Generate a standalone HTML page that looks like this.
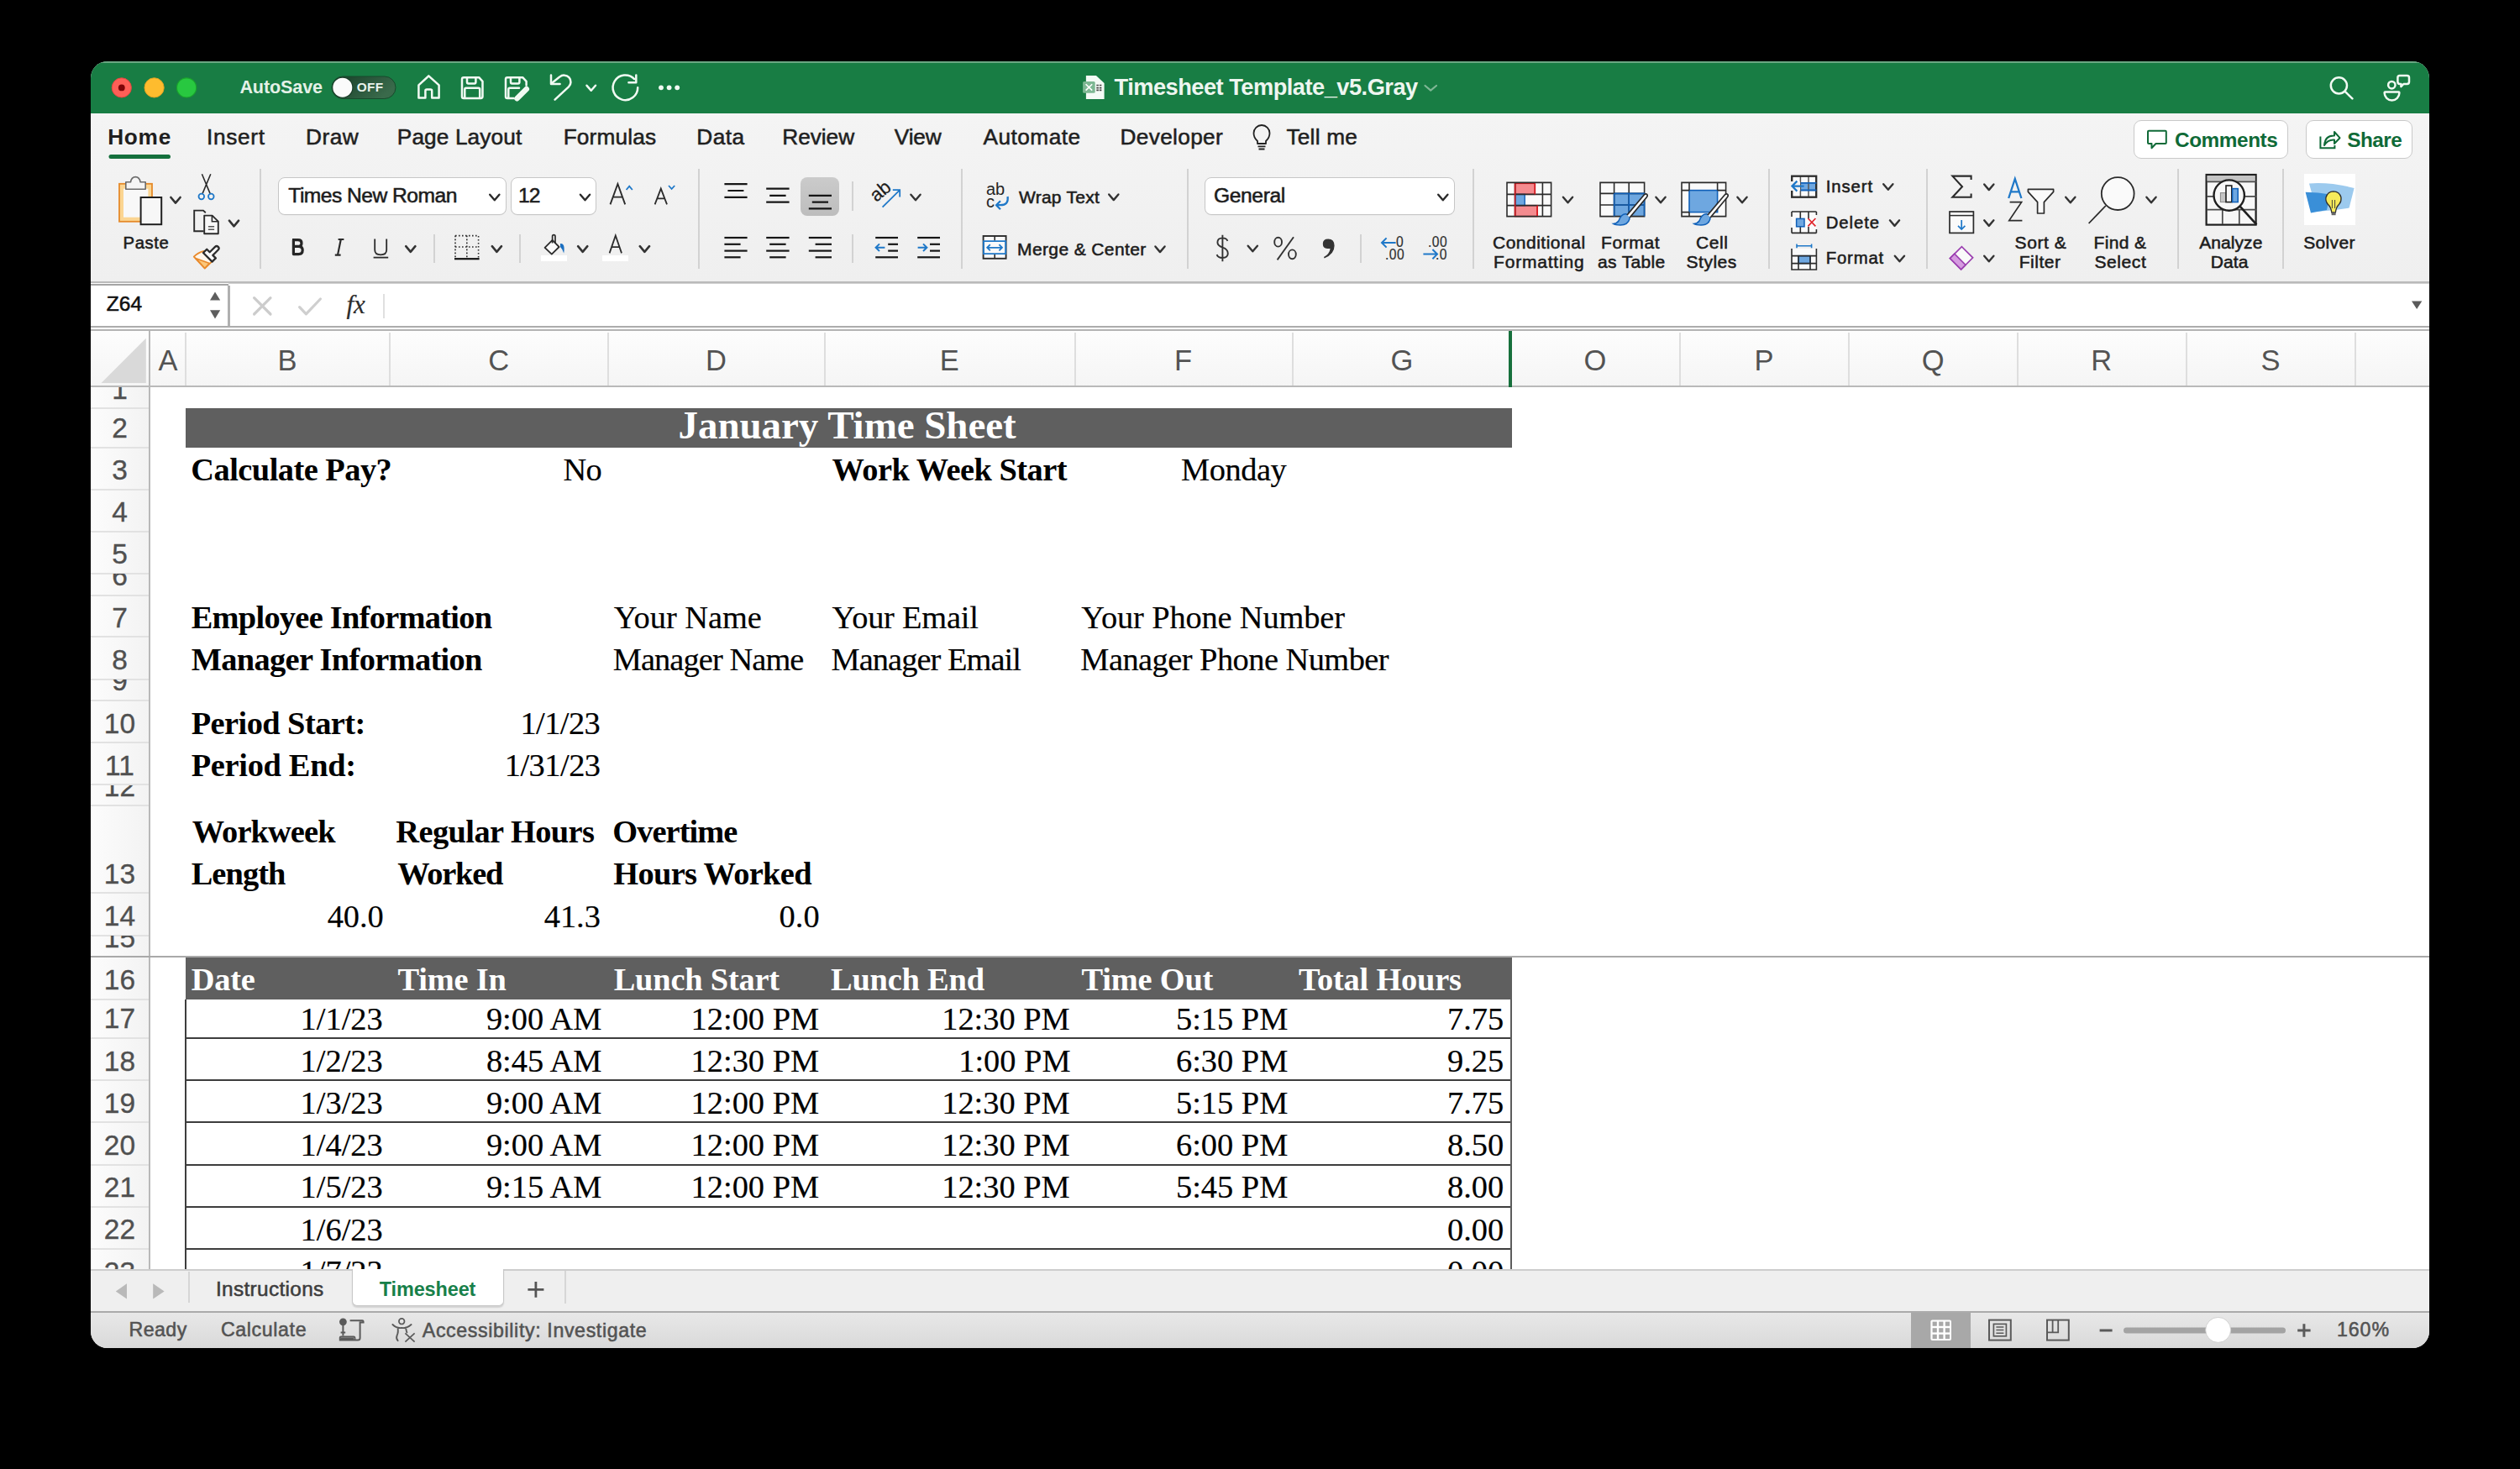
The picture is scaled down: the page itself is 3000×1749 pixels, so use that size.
<!DOCTYPE html>
<html><head><meta charset="utf-8"><style>
html,body{margin:0;padding:0}
body{width:3000px;height:1749px;background:#000;position:relative;overflow:hidden}
#win{position:absolute;left:108px;top:73px;width:2784px;height:1532px;border-radius:20px;overflow:hidden;background:#f1f1f1}
#pg{position:absolute;left:-108px;top:-73px;width:3000px;height:1749px}
.r{position:absolute}
.t{position:absolute;white-space:pre}
svg{position:absolute;left:0;top:0}
</style></head><body>
<div id="win"><div id="pg">
<div class=r style="left:108px;top:73px;width:2784px;height:62px;background:#187d44;"></div>
<div class=r style="left:108px;top:73px;width:2784px;height:2px;background:#6aa883;"></div>
<div class=r style="left:108px;top:135px;width:2784px;height:201px;background:linear-gradient(#f4f4f4,#efefef);"></div>
<div class=r style="left:108px;top:335px;width:2784px;height:2px;background:#bababa;"></div>
<div class=r style="left:108px;top:337px;width:2784px;height:51px;background:#ffffff;"></div>
<div class=r style="left:108px;top:338px;width:164px;height:2px;background:#a5a5a5;"></div>
<div class=r style="left:272px;top:337px;width:2620px;height:1px;background:#cfcfcf;"></div>
<div class=r style="left:271px;top:340px;width:3px;height:48px;background:#b0b0b0;"></div>
<div class=r style="left:108px;top:388px;width:2784px;height:2px;background:#adadad;"></div>
<div class=r style="left:108px;top:390px;width:2784px;height:2px;background:#f7f7f7;"></div>
<div class=r style="left:108px;top:392px;width:2784px;height:2px;background:#b4b4b4;"></div>
<div class=r style="left:2539.6px;top:143.3px;width:184.20000000000027px;height:45.39999999999998px;background:#ffffff;border:1.5px solid #c9c9c9;border-radius:9px;box-sizing:border-box"></div>
<div class=r style="left:2744.6px;top:143.3px;width:127.0px;height:45.39999999999998px;background:#ffffff;border:1.5px solid #c9c9c9;border-radius:9px;box-sizing:border-box"></div>
<div class=r style="left:309px;top:201px;width:2px;height:119px;background:#d2d2d2;"></div>
<div class=r style="left:831px;top:201px;width:2px;height:119px;background:#d2d2d2;"></div>
<div class=r style="left:1144px;top:201px;width:2px;height:119px;background:#d2d2d2;"></div>
<div class=r style="left:1412.7px;top:201px;width:2.0px;height:119px;background:#d2d2d2;"></div>
<div class=r style="left:1753px;top:201px;width:2px;height:119px;background:#d2d2d2;"></div>
<div class=r style="left:2104.7px;top:201px;width:2.0px;height:119px;background:#d2d2d2;"></div>
<div class=r style="left:2292.6px;top:201px;width:2.0px;height:119px;background:#d2d2d2;"></div>
<div class=r style="left:2592px;top:201px;width:2px;height:119px;background:#d2d2d2;"></div>
<div class=r style="left:2717.4px;top:201px;width:2.0px;height:119px;background:#d2d2d2;"></div>
<div class=r style="left:516px;top:279px;width:2px;height:33.5px;background:#d2d2d2;"></div>
<div class=r style="left:618.4px;top:279px;width:2.0px;height:33.5px;background:#d2d2d2;"></div>
<div class=r style="left:1014.4px;top:279px;width:2.0px;height:33.5px;background:#d2d2d2;"></div>
<div class=r style="left:1618.7px;top:279px;width:2.0px;height:33.5px;background:#d2d2d2;"></div>
<div class=r style="left:1014.4px;top:216px;width:2.0px;height:35px;background:#d2d2d2;"></div>
<div class=r style="left:331px;top:211px;width:271.6px;height:45.39999999999998px;background:#ffffff;border:1.5px solid #c6c6c6;border-radius:8px;box-sizing:border-box;box-shadow:0 0.5px 0.5px rgba(0,0,0,0.05)"></div>
<div class=r style="left:607.6px;top:211px;width:102.89999999999998px;height:45.39999999999998px;background:#ffffff;border:1.5px solid #c6c6c6;border-radius:8px;box-sizing:border-box;box-shadow:0 0.5px 0.5px rgba(0,0,0,0.05)"></div>
<div class=r style="left:643.7px;top:304px;width:31.09999999999991px;height:7px;background:#ffffff;"></div>
<div class=r style="left:717px;top:304px;width:31px;height:7px;background:#ffffff;"></div>
<div class=r style="left:953px;top:211px;width:46px;height:46px;background:linear-gradient(#cbcbcb,#bdbdbd);border-radius:8px"></div>
<div class=r style="left:1433.5px;top:211px;width:298.9000000000001px;height:45.39999999999998px;background:#ffffff;border:1.5px solid #c6c6c6;border-radius:8px;box-sizing:border-box;box-shadow:0 0.5px 0.5px rgba(0,0,0,0.05)"></div>
<div class=r style="left:108px;top:394px;width:2784px;height:66px;background:linear-gradient(#fdfdfd,#f5f5f5);"></div>
<div class=r style="left:108px;top:459px;width:2784px;height:2px;background:#b9b9b9;"></div>
<div class=r style="left:220.25px;top:396px;width:1.5px;height:63px;background:#dedede;"></div>
<div class=r style="left:463.25px;top:396px;width:1.5px;height:63px;background:#dedede;"></div>
<div class=r style="left:723.25px;top:396px;width:1.5px;height:63px;background:#dedede;"></div>
<div class=r style="left:981.25px;top:396px;width:1.5px;height:63px;background:#dedede;"></div>
<div class=r style="left:1279.25px;top:396px;width:1.5px;height:63px;background:#dedede;"></div>
<div class=r style="left:1538.25px;top:396px;width:1.5px;height:63px;background:#dedede;"></div>
<div class=r style="left:1797.25px;top:396px;width:1.5px;height:63px;background:#dedede;"></div>
<div class=r style="left:1999.25px;top:396px;width:1.5px;height:63px;background:#dedede;"></div>
<div class=r style="left:2200.25px;top:396px;width:1.5px;height:63px;background:#dedede;"></div>
<div class=r style="left:2401.25px;top:396px;width:1.5px;height:63px;background:#dedede;"></div>
<div class=r style="left:2602.25px;top:396px;width:1.5px;height:63px;background:#dedede;"></div>
<div class=r style="left:2803.25px;top:396px;width:1.5px;height:63px;background:#dedede;"></div>
<div class=r style="left:1796px;top:394px;width:4px;height:67px;background:#17703c;"></div>
<div class=r style="left:179px;top:461px;width:2713px;height:1050px;background:#ffffff;"></div>
<div class=r style="left:108px;top:461px;width:69px;height:1050px;background:linear-gradient(90deg,#fcfcfc,#f3f3f3);"></div>
<div class=r style="left:177px;top:394px;width:2px;height:1117px;background:#b9b9b9;"></div>
<div class=r style="left:108px;top:485px;width:69px;height:2px;background:#e2e2e2;"></div>
<div class=r style="left:108px;top:532px;width:69px;height:2px;background:#e2e2e2;"></div>
<div class=r style="left:108px;top:582px;width:69px;height:2px;background:#e2e2e2;"></div>
<div class=r style="left:108px;top:632px;width:69px;height:2px;background:#e2e2e2;"></div>
<div class=r style="left:108px;top:682px;width:69px;height:2px;background:#e2e2e2;"></div>
<div class=r style="left:108px;top:708px;width:69px;height:2px;background:#e2e2e2;"></div>
<div class=r style="left:108px;top:757px;width:69px;height:2px;background:#e2e2e2;"></div>
<div class=r style="left:108px;top:808px;width:69px;height:2px;background:#e2e2e2;"></div>
<div class=r style="left:108px;top:833px;width:69px;height:2px;background:#e2e2e2;"></div>
<div class=r style="left:108px;top:883px;width:69px;height:2px;background:#e2e2e2;"></div>
<div class=r style="left:108px;top:933px;width:69px;height:2px;background:#e2e2e2;"></div>
<div class=r style="left:108px;top:958px;width:69px;height:2px;background:#e2e2e2;"></div>
<div class=r style="left:108px;top:1062px;width:69px;height:2px;background:#e2e2e2;"></div>
<div class=r style="left:108px;top:1113px;width:69px;height:2px;background:#e2e2e2;"></div>
<div class=r style="left:108px;top:1138px;width:69px;height:2px;background:#e2e2e2;"></div>
<div class=r style="left:108px;top:1189px;width:69px;height:2px;background:#e2e2e2;"></div>
<div class=r style="left:108px;top:1235px;width:69px;height:2px;background:#e2e2e2;"></div>
<div class=r style="left:108px;top:1285px;width:69px;height:2px;background:#e2e2e2;"></div>
<div class=r style="left:108px;top:1335px;width:69px;height:2px;background:#e2e2e2;"></div>
<div class=r style="left:108px;top:1386px;width:69px;height:2px;background:#e2e2e2;"></div>
<div class=r style="left:108px;top:1436px;width:69px;height:2px;background:#e2e2e2;"></div>
<div class=r style="left:108px;top:1486px;width:69px;height:2px;background:#e2e2e2;"></div>
<div class=r style="left:108px;top:460.8px;width:69px;height:25.2px;overflow:hidden"><div class=t style="left:0;width:69px;text-align:center;top:-14.3px;font-family:'Liberation Sans',sans-serif;font-size:33.5px;line-height:33.5px;color:#505050;-webkit-text-stroke:0.35px">1</div></div>
<div class=r style="left:108px;top:486.0px;width:69px;height:46.8px;overflow:hidden"><div class=t style="left:0;width:69px;text-align:center;top:7.3px;font-family:'Liberation Sans',sans-serif;font-size:33.5px;line-height:33.5px;color:#505050;-webkit-text-stroke:0.35px">2</div></div>
<div class=r style="left:108px;top:532.8px;width:69px;height:49.8px;overflow:hidden"><div class=t style="left:0;width:69px;text-align:center;top:10.3px;font-family:'Liberation Sans',sans-serif;font-size:33.5px;line-height:33.5px;color:#505050;-webkit-text-stroke:0.35px">3</div></div>
<div class=r style="left:108px;top:582.6px;width:69px;height:50.0px;overflow:hidden"><div class=t style="left:0;width:69px;text-align:center;top:10.5px;font-family:'Liberation Sans',sans-serif;font-size:33.5px;line-height:33.5px;color:#505050;-webkit-text-stroke:0.35px">4</div></div>
<div class=r style="left:108px;top:632.6px;width:69px;height:50.4px;overflow:hidden"><div class=t style="left:0;width:69px;text-align:center;top:10.9px;font-family:'Liberation Sans',sans-serif;font-size:33.5px;line-height:33.5px;color:#505050;-webkit-text-stroke:0.35px">5</div></div>
<div class=r style="left:108px;top:683.0px;width:69px;height:25.6px;overflow:hidden"><div class=t style="left:0;width:69px;text-align:center;top:-13.9px;font-family:'Liberation Sans',sans-serif;font-size:33.5px;line-height:33.5px;color:#505050;-webkit-text-stroke:0.35px">6</div></div>
<div class=r style="left:108px;top:708.6px;width:69px;height:49.6px;overflow:hidden"><div class=t style="left:0;width:69px;text-align:center;top:10.1px;font-family:'Liberation Sans',sans-serif;font-size:33.5px;line-height:33.5px;color:#505050;-webkit-text-stroke:0.35px">7</div></div>
<div class=r style="left:108px;top:758.2px;width:69px;height:50.5px;overflow:hidden"><div class=t style="left:0;width:69px;text-align:center;top:11.0px;font-family:'Liberation Sans',sans-serif;font-size:33.5px;line-height:33.5px;color:#505050;-webkit-text-stroke:0.35px">8</div></div>
<div class=r style="left:108px;top:808.7px;width:69px;height:24.8px;overflow:hidden"><div class=t style="left:0;width:69px;text-align:center;top:-14.7px;font-family:'Liberation Sans',sans-serif;font-size:33.5px;line-height:33.5px;color:#505050;-webkit-text-stroke:0.35px">9</div></div>
<div class=r style="left:108px;top:833.5px;width:69px;height:50.5px;overflow:hidden"><div class=t style="left:0;width:69px;text-align:center;top:11.0px;font-family:'Liberation Sans',sans-serif;font-size:33.5px;line-height:33.5px;color:#505050;-webkit-text-stroke:0.35px">10</div></div>
<div class=r style="left:108px;top:884.0px;width:69px;height:50.5px;overflow:hidden"><div class=t style="left:0;width:69px;text-align:center;top:11.0px;font-family:'Liberation Sans',sans-serif;font-size:33.5px;line-height:33.5px;color:#505050;-webkit-text-stroke:0.35px">11</div></div>
<div class=r style="left:108px;top:934.5px;width:69px;height:24.5px;overflow:hidden"><div class=t style="left:0;width:69px;text-align:center;top:-15.0px;font-family:'Liberation Sans',sans-serif;font-size:33.5px;line-height:33.5px;color:#505050;-webkit-text-stroke:0.35px">12</div></div>
<div class=r style="left:108px;top:959.0px;width:69px;height:104.4px;overflow:hidden"><div class=t style="left:0;width:69px;text-align:center;top:64.9px;font-family:'Liberation Sans',sans-serif;font-size:33.5px;line-height:33.5px;color:#505050;-webkit-text-stroke:0.35px">13</div></div>
<div class=r style="left:108px;top:1063.4px;width:69px;height:50.6px;overflow:hidden"><div class=t style="left:0;width:69px;text-align:center;top:11.1px;font-family:'Liberation Sans',sans-serif;font-size:33.5px;line-height:33.5px;color:#505050;-webkit-text-stroke:0.35px">14</div></div>
<div class=r style="left:108px;top:1114.0px;width:69px;height:25.3px;overflow:hidden"><div class=t style="left:0;width:69px;text-align:center;top:-14.2px;font-family:'Liberation Sans',sans-serif;font-size:33.5px;line-height:33.5px;color:#505050;-webkit-text-stroke:0.35px">15</div></div>
<div class=r style="left:108px;top:1139.3px;width:69px;height:50.3px;overflow:hidden"><div class=t style="left:0;width:69px;text-align:center;top:10.8px;font-family:'Liberation Sans',sans-serif;font-size:33.5px;line-height:33.5px;color:#505050;-webkit-text-stroke:0.35px">16</div></div>
<div class=r style="left:108px;top:1189.6px;width:69px;height:46.4px;overflow:hidden"><div class=t style="left:0;width:69px;text-align:center;top:6.9px;font-family:'Liberation Sans',sans-serif;font-size:33.5px;line-height:33.5px;color:#505050;-webkit-text-stroke:0.35px">17</div></div>
<div class=r style="left:108px;top:1236.0px;width:69px;height:50.2px;overflow:hidden"><div class=t style="left:0;width:69px;text-align:center;top:10.7px;font-family:'Liberation Sans',sans-serif;font-size:33.5px;line-height:33.5px;color:#505050;-webkit-text-stroke:0.35px">18</div></div>
<div class=r style="left:108px;top:1286.2px;width:69px;height:50.3px;overflow:hidden"><div class=t style="left:0;width:69px;text-align:center;top:10.8px;font-family:'Liberation Sans',sans-serif;font-size:33.5px;line-height:33.5px;color:#505050;-webkit-text-stroke:0.35px">19</div></div>
<div class=r style="left:108px;top:1336.5px;width:69px;height:50.2px;overflow:hidden"><div class=t style="left:0;width:69px;text-align:center;top:10.7px;font-family:'Liberation Sans',sans-serif;font-size:33.5px;line-height:33.5px;color:#505050;-webkit-text-stroke:0.35px">20</div></div>
<div class=r style="left:108px;top:1386.7px;width:69px;height:50.1px;overflow:hidden"><div class=t style="left:0;width:69px;text-align:center;top:10.6px;font-family:'Liberation Sans',sans-serif;font-size:33.5px;line-height:33.5px;color:#505050;-webkit-text-stroke:0.35px">21</div></div>
<div class=r style="left:108px;top:1436.8px;width:69px;height:50.2px;overflow:hidden"><div class=t style="left:0;width:69px;text-align:center;top:10.7px;font-family:'Liberation Sans',sans-serif;font-size:33.5px;line-height:33.5px;color:#505050;-webkit-text-stroke:0.35px">22</div></div>
<div class=r style="left:108px;top:1487.0px;width:69px;height:24.0px;overflow:hidden"><div class=t style="left:0;width:69px;text-align:center;top:10.7px;font-family:'Liberation Sans',sans-serif;font-size:33.5px;line-height:33.5px;color:#505050;-webkit-text-stroke:0.35px">23</div></div>
<div class=r style="left:108px;top:1138px;width:2784px;height:2px;background:#a9a9a9;"></div>
<div class=r style="left:221px;top:485.5px;width:1578.5px;height:47.5px;background:#5f5f5f;"></div>
<div class=r style="left:221px;top:1140px;width:1578.5px;height:50px;background:#5f5f5f;"></div>
<div class=r style="left:221px;top:1235px;width:1578.5px;height:2px;background:#3d3d3d;"></div>
<div class=r style="left:221px;top:1285px;width:1578.5px;height:2px;background:#3d3d3d;"></div>
<div class=r style="left:221px;top:1335px;width:1578.5px;height:2px;background:#3d3d3d;"></div>
<div class=r style="left:221px;top:1386px;width:1578.5px;height:2px;background:#3d3d3d;"></div>
<div class=r style="left:221px;top:1436px;width:1578.5px;height:2px;background:#3d3d3d;"></div>
<div class=r style="left:221px;top:1486px;width:1578.5px;height:2px;background:#3d3d3d;"></div>
<div class=r style="left:220px;top:1190px;width:2px;height:321px;background:#3d3d3d;"></div>
<div class=r style="left:1797.5px;top:1190px;width:2.0px;height:321px;background:#5c5c5c;"></div>
<div class=r style="left:456px;top:350px;width:2px;height:29px;background:#e0e0e0;"></div>
<div class=r style="left:108px;top:1511px;width:2784px;height:51px;background:#efefef;"></div>
<div class=r style="left:108px;top:1511px;width:2784px;height:1.5px;background:#cdcdcd;"></div>
<div class=r style="left:418.5px;top:1511px;width:181.5px;height:44px;background:#ffffff;border:1.5px solid #c8c8c8;border-top:none;border-radius:0 0 6px 6px;box-sizing:border-box;box-shadow:0 1.5px 1.5px rgba(0,0,0,0.12)"></div>
<div class=r style="left:108px;top:1561px;width:2784px;height:2px;background:#ababab;"></div>
<div class=r style="left:224px;top:1514px;width:2px;height:37px;background:#d6d6d6;"></div>
<div class=r style="left:672.2px;top:1513px;width:2.0px;height:39px;background:#d6d6d6;"></div>
<div class=r style="left:108px;top:1563px;width:2784px;height:42px;background:linear-gradient(#e8e8e8,#d9d9d9);"></div>
<div class=r style="left:2275px;top:1563px;width:71px;height:42px;background:#a8a8a8;"></div>
<svg width="3000" height="1749" viewBox="0 0 3000 1749">
<circle cx="144.8" cy="104.4" r="11.6" fill="#fe5f57" stroke="#e1473f" stroke-width="1"/>
<circle cx="144.8" cy="104.4" r="3.9" fill="#7e0508"/>
<circle cx="183.6" cy="104.4" r="11.6" fill="#febc2e" stroke="#dea123" stroke-width="1"/>
<circle cx="222.1" cy="104.4" r="11.6" fill="#28c840" stroke="#1aa22d" stroke-width="1.2"/>
<defs><linearGradient id="tg" x1="0" y1="0" x2="1" y2="0.4"><stop offset="0" stop-color="#163d27"/><stop offset="1" stop-color="#3a6a4b"/></linearGradient></defs>
<rect x="395" y="91" width="76" height="26.5" rx="13.25" fill="url(#tg)" stroke="#174a2c" stroke-width="1"/>
<circle cx="408.2" cy="104.4" r="12.2" fill="#0e2a19" opacity="0.6"/>
<circle cx="407.8" cy="104.2" r="11.5" fill="#fbfbfb"/>
<path d="M498.4 116.6 V101.4 L510.3 90.4 L522.6 101.4 V116.6 H514.2 V108.2 Q514.2 106.6 512.6 106.6 H508 Q506.4 106.6 506.4 108.2 V116.6 Z" fill="none" stroke="#f1faf3" stroke-width="2.5" stroke-linejoin="round" stroke-linecap="round"/>
<path d="M552 92.2 H570.2 L574.5 96.8 V114.8 Q574.5 117 572.3 117 H552 Q550 117 550 115 V94.2 Q550 92.2 552 92.2 Z" fill="none" stroke="#f1faf3" stroke-width="2.5" stroke-linejoin="round" stroke-linecap="round"/>
<path d="M556 92.4 V97.8 Q556 99.4 557.6 99.4 H564.8 Q566.4 99.4 566.4 97.8 V92.4" fill="none" stroke="#f1faf3" stroke-width="2.5" stroke-linejoin="round" stroke-linecap="round"/>
<path d="M553.3 116.8 V106.4 Q553.3 104.8 554.9 104.8 H569.6 Q571.2 104.8 571.2 106.4 V116.8" fill="none" stroke="#f1faf3" stroke-width="2.5" stroke-linejoin="round" stroke-linecap="round"/>
<path d="M611.5 117 H604 Q602 117 602 115 V94.2 Q602 92.2 604 92.2 H622.2 L626.6 96.8 V101.5" fill="none" stroke="#f1faf3" stroke-width="2.5" stroke-linejoin="round" stroke-linecap="round"/>
<path d="M608 92.4 V97.8 Q608 99.4 609.6 99.4 H616.8 Q618.4 99.4 618.4 97.8 V92.4" fill="none" stroke="#f1faf3" stroke-width="2.5" stroke-linejoin="round" stroke-linecap="round"/>
<path d="M605.3 116.8 V106.4 Q605.3 104.8 606.9 104.8 H618" fill="none" stroke="#f1faf3" stroke-width="2.5" stroke-linejoin="round" stroke-linecap="round"/>
<path d="M615.5 117.2 L626.8 106" stroke="#f1faf3" stroke-width="6.5" stroke-linecap="round"/>
<path d="M656 89.4 V99.9 H666.6" fill="none" stroke="#f1faf3" stroke-width="2.5" stroke-linejoin="round" stroke-linecap="round"/>
<path d="M656.6 99.2 L666.2 91.6 A8 8 0 0 1 677 103.4 L660.6 118.6" fill="none" stroke="#f1faf3" stroke-width="2.5" stroke-linejoin="round" stroke-linecap="round"/>
<path d="M698.5 101.8 L703.8 107.8 L709 101.8" fill="none" stroke="#f1faf3" stroke-width="2.5" stroke-linejoin="round" stroke-linecap="round"/>
<path d="M759.2 104.2 A14.8 14.8 0 1 1 755.2 94.2" fill="none" stroke="#f1faf3" stroke-width="2.5" stroke-linejoin="round" stroke-linecap="round"/>
<path d="M757.3 89.4 V98.2 H748.4" fill="none" stroke="#f1faf3" stroke-width="2.5" stroke-linejoin="round" stroke-linecap="round"/>
<circle cx="787" cy="104.3" r="2.9" fill="#f1faf3"/>
<circle cx="796.6" cy="104.3" r="2.9" fill="#f1faf3"/>
<circle cx="806.2" cy="104.3" r="2.9" fill="#f1faf3"/>
<path d="M1292.9 90 H1304.9 L1314.6 99.1 V118 H1292.9 Z" fill="#f4fbf6"/>
<rect x="1289.1" y="97" width="14.6" height="13.7" rx="1.5" fill="#7db893"/>
<path d="M1292.6 100.2 L1300.2 107.6 M1300.2 100.2 L1292.6 107.6" stroke="#ffffff" stroke-width="1.6"/>
<path d="M1305.3 101.5 H1307.9 M1308.8 101.5 H1311.4" stroke="#444" stroke-width="1.7"/>
<path d="M1305.3 104.6 H1307.9 M1308.8 104.6 H1311.4" stroke="#444" stroke-width="1.7"/>
<path d="M1305.3 107.4 H1307.9 M1308.8 107.4 H1311.4" stroke="#444" stroke-width="1.7"/>
<path d="M1696.5 102 L1703.2 107.6 L1710 102" fill="none" stroke="#7fb795" stroke-width="2.2" stroke-linecap="round" stroke-linejoin="round"/>
<circle cx="2784.4" cy="101.8" r="9.6" fill="none" stroke="#f1faf3" stroke-width="2.5" stroke-linejoin="round" stroke-linecap="round"/>
<path d="M2791.6 108.8 L2800.4 117.4" fill="none" stroke="#f1faf3" stroke-width="2.5" stroke-linejoin="round" stroke-linecap="round"/>
<circle cx="2847.3" cy="101.2" r="4.2" fill="none" stroke="#f1faf3" stroke-width="2.5" stroke-linejoin="round" stroke-linecap="round"/>
<path d="M2839.5 109.6 H2855.6 Q2856.4 109.6 2856.4 110.6 A8.4 8.4 0 0 1 2838.6 110.6 Q2838.6 109.6 2839.5 109.6 Z" fill="none" stroke="#f1faf3" stroke-width="2.5" stroke-linejoin="round" stroke-linecap="round"/>
<path d="M2856.8 90 H2865.6 Q2868 90 2868 92.4 V97.6 Q2868 100 2865.6 100 H2861.4 L2858.4 103.2 V100 H2856.8 Q2854.4 100 2854.4 97.6 V92.4 Q2854.4 90 2856.8 90 Z" fill="none" stroke="#f1faf3" stroke-width="2.5" stroke-linejoin="round" stroke-linecap="round"/>
<rect x="129.5" y="184" width="73.5" height="5" rx="2.5" fill="#15703d"/>
<path d="M1497 168 Q1492.5 164 1492.5 158.5 A9.5 9.5 0 0 1 1511.5 158.5 Q1511.5 164 1507 168 V171 H1497 Z" fill="none" stroke="#222" stroke-width="1.8" stroke-linejoin="round"/>
<path d="M1497.5 174.4 H1506.5 M1498.5 177.5 H1505.5" stroke="#222" stroke-width="1.8"/>
<path d="M2558 155.8 H2577.8 Q2578.8 155.8 2578.8 156.8 V170 Q2578.8 171 2577.8 171 H2566.5 L2561.5 176.2 V171 H2558 Q2557 171 2557 170 V156.8 Q2557 155.8 2558 155.8 Z" fill="none" stroke="#0f6a37" stroke-width="2" stroke-linejoin="round"/>
<path d="M2762.4 162.4 V176.3 H2779.4 V173" fill="none" stroke="#0f6a37" stroke-width="2"/>
<path d="M2767 173 Q2768 161 2779 161.5 V157 L2785.5 164.2 L2779 171 V166.5 Q2771 166 2767 173 Z" fill="none" stroke="#0f6a37" stroke-width="2" stroke-linejoin="round"/>
<rect x="142" y="218.8" width="39" height="45" fill="#fbd592" stroke="#e58a2a" stroke-width="1.8"/>
<rect x="147" y="224.7" width="29.4" height="34" fill="#f8f8f8"/>
<path d="M149.8 225.2 V216.8 H155.5 Q156.5 210.6 161.3 210.6 Q166.1 210.6 167.1 216.8 H173.2 V225.2 Z" fill="#f5f5f5" stroke="#6b6b6b" stroke-width="1.6" stroke-linejoin="round"/>
<rect x="167.6" y="235" width="24.6" height="32.2" fill="#f7f7f7" stroke="#1f1f1f" stroke-width="2"/>
<path d="M203.4 235.0 L209.0 241.6 L214.6 235.0" fill="none" stroke="#333" stroke-width="2.6" stroke-linecap="round" stroke-linejoin="round"/>
<path d="M240.4 207.2 L250.2 230.6 M250.8 207.2 L241 230.6" stroke="#2b2b2b" stroke-width="1.6" fill="none"/>
<circle cx="239.8" cy="234" r="3.3" fill="none" stroke="#1f78c8" stroke-width="1.8"/>
<circle cx="251.3" cy="234" r="3.3" fill="none" stroke="#1f78c8" stroke-width="1.8"/>
<path d="M242.6 275.3 H231.2 V250.6 H242 L244.8 253.2" fill="none" stroke="#2b2b2b" stroke-width="1.9"/>
<path d="M243.2 278.3 V256.6 H252.6 L259.8 263.6 V278.3 Z" fill="#f8f8f8" stroke="#2b2b2b" stroke-width="1.9" stroke-linejoin="round"/>
<path d="M252.4 256.8 V263.8 H259.6" fill="none" stroke="#2b2b2b" stroke-width="1.6"/>
<path d="M247.9 269.8 H255.1 M247.9 273.2 H255.1" stroke="#555" stroke-width="1.4"/>
<path d="M272.9 262.7 L278.5 269.3 L284.1 262.7" fill="none" stroke="#333" stroke-width="2.6" stroke-linecap="round" stroke-linejoin="round"/>
<path d="M230.8 305.6 Q236 300.4 243 298.8 L253.8 309.8 L243.8 319.6 Z" fill="#fff6ea" stroke="#e98a2c" stroke-width="1.8" stroke-linejoin="round"/>
<path d="M232.8 307.4 L249.4 313.4 L243.8 319.2 Z" fill="#fbc77a" stroke="#e98a2c" stroke-width="1.6" stroke-linejoin="round"/>
<path d="M-7.5 3 V-3 H-2.6 V-12 Q-2.6 -14.6 0 -14.6 Q2.6 -14.6 2.6 -12 V-3 H7.5 V3 Z" transform="translate(249.4 304.2) rotate(45)" fill="#f7f7f7" stroke="#2b2b2b" stroke-width="2.3" stroke-linejoin="round"/>
<path d="M583.2 231.7 L588.8 238.3 L594.4 231.7" fill="none" stroke="#2a2a2a" stroke-width="2.4" stroke-linecap="round" stroke-linejoin="round"/>
<path d="M690.9 231.7 L696.5 238.3 L702.1 231.7" fill="none" stroke="#2a2a2a" stroke-width="2.4" stroke-linecap="round" stroke-linejoin="round"/>
<path d="M726.5 243.4 L735.4 219 L744.2 243.4 M729.8 234.6 H741" fill="none" stroke="#2b2b2b" stroke-width="1.9"/>
<path d="M745.6 226 L749.2 221.6 L752.8 226" fill="none" stroke="#1f78c8" stroke-width="1.8"/>
<path d="M779.6 243.4 L786.8 224.6 L794 243.4 M782.2 236.4 H791.4" fill="none" stroke="#2b2b2b" stroke-width="1.8"/>
<path d="M796 221 L799.6 225 L803.2 221" fill="none" stroke="#1f78c8" stroke-width="1.8"/>
<path d="M349.4 285.6 V302.6 H355.4 Q360.2 302.6 360.2 297.8 Q360.2 293.4 355.4 293.4 H349.4 M349.4 293.4 H354.8 Q359 293.4 359 289.4 Q359 285.6 354.8 285.6 H348" fill="none" stroke="#262626" stroke-width="3.2" stroke-linejoin="round"/>
<path d="M405.8 285 L402 303.6 M402.6 285 H409.4 M398.8 303.6 H405.6" fill="none" stroke="#2b2b2b" stroke-width="2.2"/>
<path d="M446.2 284.4 V297.6 Q446.2 303.4 453.2 303.4 Q460.2 303.4 460.2 297.6 V284.4" fill="none" stroke="#2b2b2b" stroke-width="1.8"/>
<path d="M444.6 306.6 H462.2" stroke="#2b2b2b" stroke-width="1.8"/>
<path d="M483.2 293.2 L488.8 299.8 L494.4 293.2" fill="none" stroke="#333" stroke-width="2.6" stroke-linecap="round" stroke-linejoin="round"/>
<path d="M542 280.6 H569.6 V307 M542 280.6 V307 M542 294 H569.6 M555.8 280.6 V307" fill="none" stroke="#2b2b2b" stroke-width="1.6" stroke-dasharray="1.6 2.4"/>
<path d="M541 308.2 H570.6" stroke="#111" stroke-width="2.2"/>
<path d="M585.8 293.2 L591.4 299.8 L597.0 293.2" fill="none" stroke="#333" stroke-width="2.6" stroke-linecap="round" stroke-linejoin="round"/>
<path d="M648.6 294.8 L657.6 285.8 L665.6 294 L656.8 302.6 Z" fill="#fafafa" stroke="#2b2b2b" stroke-width="1.8" stroke-linejoin="round"/>
<path d="M657.6 289.6 V281.6 Q657.6 279.6 659.2 279.6 Q661 279.6 661 281.6 V290" fill="none" stroke="#2b2b2b" stroke-width="1.7"/>
<path d="M667 290 Q671.2 289.6 671.6 295 Q671.8 298.6 671.2 301.6 Q669.8 296.6 667 294 Z" fill="#1b6fc0"/>
<path d="M688.1 293.2 L693.7 299.8 L699.3 293.2" fill="none" stroke="#333" stroke-width="2.6" stroke-linecap="round" stroke-linejoin="round"/>
<path d="M725.6 301.4 L732.8 280.4 L740 301.4 M728.2 294.2 H737.4" fill="none" stroke="#2b2b2b" stroke-width="1.8"/>
<path d="M761.8 293.2 L767.4 299.8 L773.0 293.2" fill="none" stroke="#333" stroke-width="2.6" stroke-linecap="round" stroke-linejoin="round"/>
<path d="M862.4 219.2 H889.6" stroke="#161616" stroke-width="2.2"/>
<path d="M866.4 227 H885.4" stroke="#161616" stroke-width="2.2"/>
<path d="M862.4 234.8 H889.6" stroke="#161616" stroke-width="2.2"/>
<path d="M912.2 224.7 H939.6" stroke="#161616" stroke-width="2.2"/>
<path d="M916.2 232.8 H935.6" stroke="#161616" stroke-width="2.2"/>
<path d="M912.2 240.6 H939.6" stroke="#161616" stroke-width="2.2"/>
<path d="M962.8 232.8 H990" stroke="#161616" stroke-width="2.2"/>
<path d="M966.8 240.6 H986" stroke="#161616" stroke-width="2.2"/>
<path d="M962.8 248.3 H990" stroke="#161616" stroke-width="2.2"/>
<path d="M862.4 283 H889.6" stroke="#161616" stroke-width="2.2"/>
<path d="M912.2 283 H939.6" stroke="#161616" stroke-width="2.2"/>
<path d="M962.8 283 H990" stroke="#161616" stroke-width="2.2"/>
<path d="M862.4 290.8 H881.6" stroke="#161616" stroke-width="2.2"/>
<path d="M916.2 290.8 H935.6" stroke="#161616" stroke-width="2.2"/>
<path d="M970.6 290.8 H990" stroke="#161616" stroke-width="2.2"/>
<path d="M862.4 298.6 H889.6" stroke="#161616" stroke-width="2.2"/>
<path d="M912.2 298.6 H939.6" stroke="#161616" stroke-width="2.2"/>
<path d="M962.8 298.6 H990" stroke="#161616" stroke-width="2.2"/>
<path d="M862.4 306.3 H881.6" stroke="#161616" stroke-width="2.2"/>
<path d="M916.2 306.3 H935.6" stroke="#161616" stroke-width="2.2"/>
<path d="M970.6 306.3 H990" stroke="#161616" stroke-width="2.2"/>
<path d="M1050.6 246.6 L1071 226.4 M1062.8 226.2 H1071.2 V234.6" fill="none" stroke="#1f78c8" stroke-width="1.8"/>
<path d="M1084.4 231.7 L1090.0 238.3 L1095.6 231.7" fill="none" stroke="#333" stroke-width="2.4" stroke-linecap="round" stroke-linejoin="round"/>
<path d="M1042.2 283 H1069" stroke="#161616" stroke-width="2.2"/>
<path d="M1057.2 290.8 H1069" stroke="#161616" stroke-width="2.2"/>
<path d="M1057.2 298.6 H1069" stroke="#161616" stroke-width="2.2"/>
<path d="M1042.2 306.3 H1069" stroke="#161616" stroke-width="2.2"/>
<path d="M1042.6 294.7 H1053.4 M1047 290.4 L1042.6 294.7 L1047 299" fill="none" stroke="#1f78c8" stroke-width="2"/>
<path d="M1092.2 283 H1119" stroke="#161616" stroke-width="2.2"/>
<path d="M1107 290.8 H1119" stroke="#161616" stroke-width="2.2"/>
<path d="M1107 298.6 H1119" stroke="#161616" stroke-width="2.2"/>
<path d="M1092.2 306.3 H1119" stroke="#161616" stroke-width="2.2"/>
<path d="M1092.6 294.7 H1103.4 M1099 290.4 L1103.4 294.7 L1099 299" fill="none" stroke="#1f78c8" stroke-width="2"/>
<path d="M1199.6 234 Q1201 244.2 1191 244.2 H1186.4 M1191 239.2 L1186 244.2 L1191 249.2" fill="none" stroke="#1f78c8" stroke-width="2.3" stroke-linejoin="round"/>
<path d="M1320.2 231.5 L1325.8 238.1 L1331.4 231.5" fill="none" stroke="#333" stroke-width="2.4" stroke-linecap="round" stroke-linejoin="round"/>
<rect x="1170.6" y="281" width="27" height="26.8" fill="#fafafa" stroke="#2b2b2b" stroke-width="1.9"/>
<path d="M1184.2 281 V286.6 M1184.2 302.4 V307.8" stroke="#2b2b2b" stroke-width="1.6"/>
<path d="M1171 287.2 H1197.2 V302.2 H1171 Z" fill="none" stroke="#1f78c8" stroke-width="1.8"/>
<path d="M1175.2 294.8 H1193 M1178.8 291.2 L1175.2 294.8 L1178.8 298.4 M1189.4 291.2 L1193 294.8 L1189.4 298.4" fill="none" stroke="#1f78c8" stroke-width="1.8"/>
<path d="M1375.4 293.5 L1381.0 300.1 L1386.6 293.5" fill="none" stroke="#333" stroke-width="2.4" stroke-linecap="round" stroke-linejoin="round"/>
<path d="M1712.2 231.7 L1717.8 238.3 L1723.4 231.7" fill="none" stroke="#2a2a2a" stroke-width="2.4" stroke-linecap="round" stroke-linejoin="round"/>
<path d="M1461.4 286.8 Q1460 283.4 1455.4 283.4 Q1449.4 283.4 1449.4 288.6 Q1449.4 292.6 1455.4 294.6 Q1461.8 296.6 1461.8 301.8 Q1461.8 307 1455.2 307 Q1450 307 1448.6 303.2 M1455.4 279.8 V311.2" fill="none" stroke="#333" stroke-width="1.9"/>
<path d="M1485.7 292.7 L1491.3 299.3 L1496.9 292.7" fill="none" stroke="#333" stroke-width="2.4" stroke-linecap="round" stroke-linejoin="round"/>
<ellipse cx="1521.6" cy="288.2" rx="4.4" ry="5.4" fill="none" stroke="#333" stroke-width="1.9"/>
<ellipse cx="1538.4" cy="302.8" rx="4.4" ry="5.4" fill="none" stroke="#333" stroke-width="1.9"/>
<path d="M1540 282.2 L1520.6 309.4" stroke="#333" stroke-width="1.9"/>
<path d="M1580.2 296 Q1574.8 296 1574.8 290.3 Q1574.8 284.4 1581.2 284.4 Q1588.6 284.4 1588.6 292.6 Q1588.6 302.8 1576.6 307.6 L1576 306 Q1582.8 302.4 1583.6 296 Q1582.4 296 1580.2 296 Z" fill="#333"/>
<path d="M1645 289 H1661.6 M1650.6 283.4 L1645 289 L1650.6 294.6" fill="none" stroke="#1f78c8" stroke-width="2"/>
<path d="M1694.4 302.6 H1711 M1705.4 297 L1711 302.6 L1705.4 308.2" fill="none" stroke="#1f78c8" stroke-width="2"/>
<rect x="1795" y="218.4" width="51" height="39" fill="#fafafa"/>
<rect x="1803.6" y="218.4" width="23.6" height="13" fill="#f48b8f" stroke="#d71920" stroke-width="1.4"/>
<rect x="1803.6" y="244.6" width="26.4" height="13" fill="#f48b8f" stroke="#d71920" stroke-width="1.4"/>
<rect x="1803.6" y="231.4" width="11.6" height="13.2" fill="#6ea7e0" stroke="#1060b8" stroke-width="1.4"/>
<path d="M1794 217.4 H1846.6 V257.6 H1794 Z M1794 231.4 H1846.6 M1794 244.6 H1846.6 M1803.6 217.4 V257.6 M1836.4 217.4 V257.6" fill="none" stroke="#2b2b2b" stroke-width="1.6"/>
<path d="M1803.6 218.4 V257 M1827.4 218.4 V231.4 M1830.2 244.6 V257" stroke="#d71920" stroke-width="1.5"/>
<path d="M1860.9 234.7 L1866.5 241.3 L1872.1 234.7" fill="none" stroke="#333" stroke-width="2.4" stroke-linecap="round" stroke-linejoin="round"/>
<rect x="1905" y="218" width="52.6" height="40" fill="#fafafa"/>
<rect x="1921.6" y="230.4" width="36" height="27.6" fill="#6ea7e0"/>
<path d="M1905 217.4 H1957.6 V257.6 H1905 Z M1905 230.4 H1957.6 M1905 244 H1957.6 M1921.6 217.4 V257.6 M1939.2 217.4 V257.6" fill="none" stroke="#2b2b2b" stroke-width="1.6"/>
<path d="M1921.6 230.4 H1957.6 V257.6 M1921.6 230.4 V257.6 M1921.6 244 H1957.6 M1939.2 230.4 V257.6" fill="none" stroke="#1060b8" stroke-width="1.6"/>
<path d="M1927 263 Q1930 254.6 1935.4 254.8 Q1940.6 255.6 1939.8 261 Q1938 267.8 1929 268 Q1923 268 1920.6 266.4 Q1925 266 1927 263 Z" fill="#6ea7e0" stroke="#1060b8" stroke-width="1.5"/>
<path d="M1937 256 L1957.2 232 Q1959.2 230 1960.6 231.4 Q1962 232.8 1960.2 235 L1940.2 259" fill="#fafafa" stroke="#2b2b2b" stroke-width="1.7"/>
<path d="M1971.4 234.7 L1977.0 241.3 L1982.6 234.7" fill="none" stroke="#333" stroke-width="2.4" stroke-linecap="round" stroke-linejoin="round"/>
<rect x="2002" y="218" width="52.6" height="40" fill="#fafafa"/>
<rect x="2011" y="226.6" width="33.6" height="26" fill="#6ea7e0" stroke="#1060b8" stroke-width="1.6"/>
<path d="M2002 217.4 H2054.6 V257.6 H2002 Z M2002 226.6 H2011 M2044.6 226.6 H2054.6 M2002 252.6 H2011 M2011 217.4 V226.6 M2044.6 217.4 V226.6 M2011 252.6 V257.6" fill="none" stroke="#2b2b2b" stroke-width="1.6"/>
<path d="M2023 263 Q2026 254.6 2031.4 254.8 Q2036.6 255.6 2035.8 261 Q2034 267.8 2025 268 Q2019 268 2016.6 266.4 Q2021 266 2023 263 Z" fill="#6ea7e0" stroke="#1060b8" stroke-width="1.5"/>
<path d="M2033 256 L2053.2 232 Q2055.2 230 2056.6 231.4 Q2058 232.8 2056.2 235 L2036.2 259" fill="#fafafa" stroke="#2b2b2b" stroke-width="1.7"/>
<path d="M2068.4 234.7 L2074.0 241.3 L2079.6 234.7" fill="none" stroke="#333" stroke-width="2.4" stroke-linecap="round" stroke-linejoin="round"/>
<rect x="2133" y="209.5" width="29.4" height="25.4" fill="#fafafa"/>
<rect x="2143.6" y="217.9" width="18.8" height="8.6" fill="#6ea7e0"/>
<path d="M2143.4 209.5 V235 M2153 209.5 V235" stroke="#555" stroke-width="1.5"/>
<rect x="2133.2" y="209.7" width="29" height="25" fill="none" stroke="#2b2b2b" stroke-width="2.3"/>
<path d="M2143.6 217.9 H2162.4 M2143.6 226.5 H2162.4" stroke="#1060b8" stroke-width="1.8"/>
<rect x="2131" y="216" width="12" height="11" fill="#f2f2f2"/>
<path d="M2133.6 221.6 H2147.6 M2139.4 215.6 L2133.4 221.6 L2139.4 227.6" fill="none" stroke="#1f78c8" stroke-width="2.2"/>
<path d="M2242.2 219.2 L2247.8 225.8 L2253.4 219.2" fill="none" stroke="#333" stroke-width="2.4" stroke-linecap="round" stroke-linejoin="round"/>
<rect x="2133" y="252" width="29.4" height="25.4" fill="#fafafa"/>
<path d="M2133 252 H2162.4 M2133 277.4 H2162.4 M2133 252 V258 M2133 271 V277.4 M2162.4 252 V256 M2162.4 273 V277.4 M2143.3 252 V277.4 M2153 252 V260 M2153 270 V277.4" fill="none" stroke="#2b2b2b" stroke-width="1.6"/>
<rect x="2138.6" y="260.4" width="9.4" height="9.4" fill="#6ea7e0" stroke="#1060b8" stroke-width="1.5"/>
<path d="M2152.4 260 L2161.4 269.4 M2161.4 260 L2152.4 269.4" stroke="#e0242a" stroke-width="1.7"/>
<path d="M2249.9 262.3 L2255.5 268.9 L2261.1 262.3" fill="none" stroke="#333" stroke-width="2.4" stroke-linecap="round" stroke-linejoin="round"/>
<rect x="2133" y="296" width="29.4" height="25.4" fill="#fafafa"/>
<rect x="2141" y="304.6" width="14" height="9" fill="#6ea7e0" stroke="#1060b8" stroke-width="1.4"/>
<path d="M2133 296 V321 H2162.4 V296 M2133 304.6 H2162.4 M2133 313.6 H2162.4 M2141 304.6 V321 M2155 304.6 V321" fill="none" stroke="#2b2b2b" stroke-width="1.6"/>
<path d="M2139 292.8 H2156.6 M2139 290.4 V295.2 M2156.6 290.4 V295.2" fill="none" stroke="#1f78c8" stroke-width="1.6"/>
<path d="M2255.8 304.7 L2261.4 311.3 L2267.0 304.7" fill="none" stroke="#333" stroke-width="2.4" stroke-linecap="round" stroke-linejoin="round"/>
<path d="M2346.6 214 V209.6 H2324.4 L2336 222.2 L2324.4 234.8 H2346.6 V230.6" fill="none" stroke="#2b2b2b" stroke-width="2.1" stroke-linejoin="miter"/>
<path d="M2362.2 219.5 L2367.8 226.1 L2373.4 219.5" fill="none" stroke="#333" stroke-width="2.4" stroke-linecap="round" stroke-linejoin="round"/>
<rect x="2321" y="252" width="28.4" height="25.4" fill="#fafafa" stroke="#2b2b2b" stroke-width="1.7"/>
<path d="M2321 256.6 H2349.4" stroke="#2b2b2b" stroke-width="1.5"/>
<path d="M2335.2 262 V273 M2331 268.8 L2335.2 273 L2339.4 268.8" fill="none" stroke="#1f78c8" stroke-width="1.7"/>
<path d="M2362.2 262.3 L2367.8 268.9 L2373.4 262.3" fill="none" stroke="#333" stroke-width="2.4" stroke-linecap="round" stroke-linejoin="round"/>
<path d="M2321.4 307.6 L2335.4 293.6 L2348.6 306.8 L2334.6 320.8 Z" fill="#fafafa" stroke="#9b3fb0" stroke-width="1.7"/>
<path d="M2321.4 307.6 L2326.8 302.2 L2340 315.4 L2334.6 320.8 Z" fill="#d59be0" stroke="#9b3fb0" stroke-width="1.7"/>
<path d="M2362.2 304.7 L2367.8 311.3 L2373.4 304.7" fill="none" stroke="#333" stroke-width="2.4" stroke-linecap="round" stroke-linejoin="round"/>
<path d="M2391.2 236 L2398.8 213 L2406.4 236 M2393.6 228.4 H2404" fill="none" stroke="#1f78c8" stroke-width="2.3"/>
<path d="M2392.6 240.6 H2406.6 L2391.8 262.6 H2407.4" fill="none" stroke="#2b2b2b" stroke-width="1.7"/>
<path d="M2414.4 225.4 H2444.6 V228.4 L2433.4 240.6 V254 H2425.6 V240.6 L2414.4 228.4 Z" fill="#fafafa" stroke="#2b2b2b" stroke-width="1.7" stroke-linejoin="round"/>
<path d="M2459.2 234.7 L2464.8 241.3 L2470.4 234.7" fill="none" stroke="#333" stroke-width="2.4" stroke-linecap="round" stroke-linejoin="round"/>
<circle cx="2521.2" cy="230.6" r="19.4" fill="#fafafa" stroke="#2b2b2b" stroke-width="1.8"/>
<path d="M2506.8 245 L2486.6 266" stroke="#2b2b2b" stroke-width="1.8"/>
<path d="M2555.4 234.7 L2561.0 241.3 L2566.6 234.7" fill="none" stroke="#333" stroke-width="2.4" stroke-linecap="round" stroke-linejoin="round"/>
<rect x="2626.6" y="208" width="59" height="59.6" fill="#f7f7f7" stroke="#1f1f1f" stroke-width="2.2"/>
<rect x="2627.6" y="209" width="57" height="6.6" fill="#c4c4c4"/>
<path d="M2627 216.4 H2686 M2627 233.8 H2686 M2627 249.6 H2686 M2645.8 249.6 V267 M2665.8 249.6 V267" stroke="#4a4a4a" stroke-width="1.7"/>
<circle cx="2653.7" cy="232.6" r="18.2" fill="#f7f7f7" stroke="#1f1f1f" stroke-width="2.4"/>
<path d="M2666.6 245.6 L2686.4 267.4" stroke="#1f1f1f" stroke-width="2.6"/>
<rect x="2643.4" y="229.6" width="6.6" height="11" fill="#c4c4c4" stroke="#888" stroke-width="1"/>
<rect x="2650" y="221" width="6.8" height="19.6" fill="#f7f7f7" stroke="#1f1f1f" stroke-width="1.6"/>
<rect x="2657.6" y="224.6" width="6.6" height="16" fill="#6ea7e0" stroke="#1060b8" stroke-width="1.5"/>
<rect x="2743" y="207" width="61" height="61" fill="#ffffff"/>
<path d="M2749 218.4 Q2775 216.6 2802.6 224 L2796.6 247.6 Q2776 251 2758 252 Z" fill="#9ccaee"/>
<path d="M2744.6 228.8 Q2760 229 2774 231.4 L2770 250 Q2760 251.6 2751 253.4 Z" fill="#3a8fd8"/>
<path d="M2775.8 253 Q2775 246.6 2771.2 243 Q2768.2 239.4 2769 235 Q2771 228 2777.8 227.8 Q2785.2 228 2787 235 Q2787.6 239.6 2784.8 243 Q2781 246.6 2780.4 253 Z" fill="#f6ea5a" stroke="#2f2f2f" stroke-width="1.3"/>
<path d="M2776.4 248 V238 M2779.6 248 V238" stroke="#333" stroke-width="0.9"/>
<rect x="2775.6" y="252.6" width="5" height="3.6" fill="#666"/>
<path d="M120.6 456 L173.8 402.8 L173.8 456 Z" fill="#d9d9d9"/>
<path d="M250 357.6 L256 347.4 L262.2 357.6 Z M250 369.2 L256 379.4 L262.2 369.2 Z" fill="#5e5e5e"/>
<path d="M302.6 354.6 L322 374 M322 354.6 L302.6 374" stroke="#cccccc" stroke-width="3.2" stroke-linecap="round"/>
<path d="M356.6 365.6 L364.4 373.8 L381.4 356" fill="none" stroke="#cfcfcf" stroke-width="3.2" stroke-linecap="round" stroke-linejoin="round"/>
<path d="M2871 358.6 H2883.3 L2877.15 368.1 Z" fill="#5a5a5a"/>
<path d="M151 1528.2 V1546.6 L137.8 1537.4 Z" fill="#b9b9b9"/>
<path d="M182.2 1528.2 V1546.6 L195.6 1537.4 Z" fill="#b9b9b9"/>
<path d="M628.4 1535.4 H647.4 M637.9 1526 V1544.8" stroke="#555555" stroke-width="2.8"/>
<circle cx="408.4" cy="1573.8" r="4.4" fill="#5a5a5a"/>
<path d="M416.6 1572.2 H431.4 Q432.6 1572.2 432.6 1574.4 H428.6 V1593 Q428.6 1595.6 426 1595.6 H404.8 V1592.6 Q404.8 1591.4 406 1591.4 H421 Q422.4 1591.4 422.4 1593 V1595.6" fill="none" stroke="#5a5a5a" stroke-width="2"/>
<path d="M408.4 1578 V1590.6 M405.6 1586.4 H411.2" stroke="#5a5a5a" stroke-width="2"/>
<path d="M406 1592.6 H421 V1595.4 H405 Z" fill="#5a5a5a"/>
<circle cx="478.2" cy="1573.2" r="3.3" fill="none" stroke="#5a5a5a" stroke-width="1.7"/>
<path d="M467.4 1577 Q472.4 1581.8 478.2 1581 Q484 1581.8 489.6 1577 M473.4 1580.4 Q474.6 1586 472.6 1590 Q471.2 1593.6 473.6 1596.2 M483 1580.4 Q483.6 1584.6 484.4 1586.4" fill="none" stroke="#5a5a5a" stroke-width="1.9" stroke-linecap="round"/>
<path d="M482.4 1587.4 L493.6 1597.6 M493.6 1587.4 L482.4 1597.6" stroke="#5a5a5a" stroke-width="1.7"/>
<rect x="2298.4" y="1571.4" width="24.6" height="24.6" rx="2" fill="#ffffff"/>
<rect x="2300.6" y="1573.6" width="5.2" height="5.2" fill="#a8a8a8"/>
<rect x="2300.6" y="1581.2" width="5.2" height="5.2" fill="#a8a8a8"/>
<rect x="2300.6" y="1588.8" width="5.2" height="5.2" fill="#a8a8a8"/>
<rect x="2308.2" y="1573.6" width="5.2" height="5.2" fill="#a8a8a8"/>
<rect x="2308.2" y="1581.2" width="5.2" height="5.2" fill="#a8a8a8"/>
<rect x="2308.2" y="1588.8" width="5.2" height="5.2" fill="#a8a8a8"/>
<rect x="2315.8" y="1573.6" width="5.2" height="5.2" fill="#a8a8a8"/>
<rect x="2315.8" y="1581.2" width="5.2" height="5.2" fill="#a8a8a8"/>
<rect x="2315.8" y="1588.8" width="5.2" height="5.2" fill="#a8a8a8"/>
<rect x="2368" y="1571.6" width="25.8" height="24" fill="none" stroke="#5a5a5a" stroke-width="2"/>
<rect x="2373.4" y="1576.4" width="15" height="14.4" fill="none" stroke="#5a5a5a" stroke-width="1.7"/>
<path d="M2376.4 1580 H2385.4 M2376.4 1583.6 H2385.4 M2376.4 1587.2 H2385.4" stroke="#5a5a5a" stroke-width="1.5"/>
<rect x="2437" y="1571.6" width="25.8" height="24" fill="none" stroke="#5a5a5a" stroke-width="2"/>
<path d="M2437 1586.4 H2450.2 V1571.6 M2443.6 1571.6 V1586.4" fill="none" stroke="#5a5a5a" stroke-width="1.8"/>
<path d="M2499.6 1584 H2514.6" stroke="#5a5a5a" stroke-width="3"/>
<rect x="2528" y="1580.6" width="193" height="7" rx="3.5" fill="#a3a3a3"/>
<circle cx="2640.7" cy="1583.4" r="15" fill="#ffffff" stroke="#c9c9c9" stroke-width="0.8"/>
<path d="M2735.2 1584 H2750.6 M2742.9 1576.2 V1591.8" stroke="#5a5a5a" stroke-width="3"/>
</svg>
<div class=r style="left:0;top:0;width:3000px;height:1749px;clip-path:inset(461px 0 238px 179px)"><div class=t style="left:807.50px;top:483.39px;font-family:'Liberation Serif', serif;font-weight:700;font-size:47px;line-height:47px;letter-spacing:-0.047px;color:#ffffff;">January Time Sheet</div>
<div class=t style="left:227.30px;top:540.23px;font-family:'Liberation Serif', serif;font-weight:700;font-size:38.4px;line-height:38.4px;letter-spacing:-0.523px;color:#000;">Calculate Pay?</div>
<div class=t style="left:670.40px;top:540.23px;font-family:'Liberation Serif', serif;font-weight:400;font-size:38.4px;line-height:38.4px;letter-spacing:-0.5px;color:#000;-webkit-text-stroke:0.2px;">No</div>
<div class=t style="left:990.50px;top:540.23px;font-family:'Liberation Serif', serif;font-weight:700;font-size:38.4px;line-height:38.4px;letter-spacing:-0.507px;color:#000;">Work Week Start</div>
<div class=t style="left:1406.00px;top:540.23px;font-family:'Liberation Serif', serif;font-weight:400;font-size:38.4px;line-height:38.4px;letter-spacing:-0.44px;color:#000;-webkit-text-stroke:0.2px;">Monday</div>
<div class=t style="left:227.70px;top:715.83px;font-family:'Liberation Serif', serif;font-weight:700;font-size:38.4px;line-height:38.4px;letter-spacing:-0.726px;color:#000;">Employee Information</div>
<div class=t style="left:730.70px;top:715.83px;font-family:'Liberation Serif', serif;font-weight:400;font-size:38.4px;line-height:38.4px;letter-spacing:-0.013px;color:#000;-webkit-text-stroke:0.2px;">Your Name</div>
<div class=t style="left:990.50px;top:715.83px;font-family:'Liberation Serif', serif;font-weight:400;font-size:38.4px;line-height:38.4px;letter-spacing:-0.222px;color:#000;-webkit-text-stroke:0.2px;">Your Email</div>
<div class=t style="left:1287.30px;top:715.83px;font-family:'Liberation Serif', serif;font-weight:400;font-size:38.4px;line-height:38.4px;letter-spacing:-0.15px;color:#000;-webkit-text-stroke:0.2px;">Your Phone Number</div>
<div class=t style="left:227.70px;top:766.33px;font-family:'Liberation Serif', serif;font-weight:700;font-size:38.4px;line-height:38.4px;letter-spacing:-0.661px;color:#000;">Manager Information</div>
<div class=t style="left:729.70px;top:766.33px;font-family:'Liberation Serif', serif;font-weight:400;font-size:38.4px;line-height:38.4px;letter-spacing:-0.909px;color:#000;-webkit-text-stroke:0.2px;">Manager Name</div>
<div class=t style="left:989.50px;top:766.33px;font-family:'Liberation Serif', serif;font-weight:400;font-size:38.4px;line-height:38.4px;letter-spacing:-0.933px;color:#000;-webkit-text-stroke:0.2px;">Manager Email</div>
<div class=t style="left:1286.30px;top:766.33px;font-family:'Liberation Serif', serif;font-weight:400;font-size:38.4px;line-height:38.4px;letter-spacing:-0.532px;color:#000;-webkit-text-stroke:0.2px;">Manager Phone Number</div>
<div class=t style="left:227.70px;top:841.63px;font-family:'Liberation Serif', serif;font-weight:700;font-size:38.4px;line-height:38.4px;letter-spacing:-0.558px;color:#000;">Period Start:</div>
<div class=t style="left:619.40px;top:841.63px;font-family:'Liberation Serif', serif;font-weight:400;font-size:38.4px;line-height:38.4px;letter-spacing:-0.54px;color:#000;-webkit-text-stroke:0.2px;">1/1/23</div>
<div class=t style="left:227.70px;top:892.13px;font-family:'Liberation Serif', serif;font-weight:700;font-size:38.4px;line-height:38.4px;letter-spacing:-0.31px;color:#000;">Period End:</div>
<div class=t style="left:600.80px;top:892.13px;font-family:'Liberation Serif', serif;font-weight:400;font-size:38.4px;line-height:38.4px;letter-spacing:-0.517px;color:#000;-webkit-text-stroke:0.2px;">1/31/23</div>
<div class=t style="left:228.70px;top:971.13px;font-family:'Liberation Serif', serif;font-weight:700;font-size:38.4px;line-height:38.4px;letter-spacing:-0.886px;color:#000;">Workweek</div>
<div class=t style="left:227.70px;top:1021.13px;font-family:'Liberation Serif', serif;font-weight:700;font-size:38.4px;line-height:38.4px;letter-spacing:-0.92px;color:#000;">Length</div>
<div class=t style="left:471.30px;top:971.13px;font-family:'Liberation Serif', serif;font-weight:700;font-size:38.4px;line-height:38.4px;letter-spacing:-0.567px;color:#000;">Regular Hours</div>
<div class=t style="left:473.20px;top:1021.13px;font-family:'Liberation Serif', serif;font-weight:700;font-size:38.4px;line-height:38.4px;letter-spacing:-1.2px;color:#000;">Worked</div>
<div class=t style="left:729.30px;top:971.13px;font-family:'Liberation Serif', serif;font-weight:700;font-size:38.4px;line-height:38.4px;letter-spacing:-0.943px;color:#000;">Overtime</div>
<div class=t style="left:730.30px;top:1021.13px;font-family:'Liberation Serif', serif;font-weight:700;font-size:38.4px;line-height:38.4px;letter-spacing:-0.664px;color:#000;">Hours Worked</div>
<div class=t style="left:389.70px;top:1071.63px;font-family:'Liberation Serif', serif;font-weight:400;font-size:38.4px;line-height:38.4px;letter-spacing:-0.033px;color:#000;-webkit-text-stroke:0.2px;">40.0</div>
<div class=t style="left:647.70px;top:1071.63px;font-family:'Liberation Serif', serif;font-weight:400;font-size:38.4px;line-height:38.4px;letter-spacing:0px;color:#000;-webkit-text-stroke:0.2px;">41.3</div>
<div class=t style="left:927.60px;top:1071.63px;font-family:'Liberation Serif', serif;font-weight:400;font-size:38.4px;line-height:38.4px;letter-spacing:0px;color:#000;-webkit-text-stroke:0.2px;">0.0</div>
<div class=t style="left:227.70px;top:1147.23px;font-family:'Liberation Serif', serif;font-weight:700;font-size:38.4px;line-height:38.4px;letter-spacing:0px;color:#ffffff;letter-spacing:-0.2px">Date</div>
<div class=t style="left:473.60px;top:1147.23px;font-family:'Liberation Serif', serif;font-weight:700;font-size:38.4px;line-height:38.4px;letter-spacing:0px;color:#ffffff;letter-spacing:-0.2px">Time In</div>
<div class=t style="left:730.70px;top:1147.23px;font-family:'Liberation Serif', serif;font-weight:700;font-size:38.4px;line-height:38.4px;letter-spacing:0px;color:#ffffff;letter-spacing:-0.2px">Lunch Start</div>
<div class=t style="left:989.00px;top:1147.23px;font-family:'Liberation Serif', serif;font-weight:700;font-size:38.4px;line-height:38.4px;letter-spacing:0px;color:#ffffff;letter-spacing:-0.2px">Lunch End</div>
<div class=t style="left:1287.60px;top:1147.23px;font-family:'Liberation Serif', serif;font-weight:700;font-size:38.4px;line-height:38.4px;letter-spacing:0px;color:#ffffff;letter-spacing:-0.2px">Time Out</div>
<div class=t style="left:1546.10px;top:1147.23px;font-family:'Liberation Serif', serif;font-weight:700;font-size:38.4px;line-height:38.4px;letter-spacing:0px;color:#ffffff;letter-spacing:-0.2px">Total Hours</div>
<div class=t style="left:357.60px;top:1193.63px;font-family:'Liberation Serif', serif;font-weight:400;font-size:38.4px;line-height:38.4px;letter-spacing:0px;color:#000;-webkit-text-stroke:0.2px;">1/1/23</div>
<div class=t style="left:578.90px;top:1193.63px;font-family:'Liberation Serif', serif;font-weight:400;font-size:38.4px;line-height:38.4px;letter-spacing:0px;color:#000;-webkit-text-stroke:0.2px;">9:00 AM</div>
<div class=t style="left:822.60px;top:1193.63px;font-family:'Liberation Serif', serif;font-weight:400;font-size:38.4px;line-height:38.4px;letter-spacing:0px;color:#000;-webkit-text-stroke:0.2px;">12:00 PM</div>
<div class=t style="left:1121.20px;top:1193.63px;font-family:'Liberation Serif', serif;font-weight:400;font-size:38.4px;line-height:38.4px;letter-spacing:0px;color:#000;-webkit-text-stroke:0.2px;">12:30 PM</div>
<div class=t style="left:1400.00px;top:1193.63px;font-family:'Liberation Serif', serif;font-weight:400;font-size:38.4px;line-height:38.4px;letter-spacing:0px;color:#000;-webkit-text-stroke:0.2px;">5:15 PM</div>
<div class=t style="left:1723.00px;top:1193.63px;font-family:'Liberation Serif', serif;font-weight:400;font-size:38.4px;line-height:38.4px;letter-spacing:0px;color:#000;-webkit-text-stroke:0.2px;">7.75</div>
<div class=t style="left:357.60px;top:1243.83px;font-family:'Liberation Serif', serif;font-weight:400;font-size:38.4px;line-height:38.4px;letter-spacing:0px;color:#000;-webkit-text-stroke:0.2px;">1/2/23</div>
<div class=t style="left:578.90px;top:1243.83px;font-family:'Liberation Serif', serif;font-weight:400;font-size:38.4px;line-height:38.4px;letter-spacing:0px;color:#000;-webkit-text-stroke:0.2px;">8:45 AM</div>
<div class=t style="left:822.60px;top:1243.83px;font-family:'Liberation Serif', serif;font-weight:400;font-size:38.4px;line-height:38.4px;letter-spacing:0px;color:#000;-webkit-text-stroke:0.2px;">12:30 PM</div>
<div class=t style="left:1141.20px;top:1243.83px;font-family:'Liberation Serif', serif;font-weight:400;font-size:38.4px;line-height:38.4px;letter-spacing:0px;color:#000;-webkit-text-stroke:0.2px;">1:00 PM</div>
<div class=t style="left:1400.00px;top:1243.83px;font-family:'Liberation Serif', serif;font-weight:400;font-size:38.4px;line-height:38.4px;letter-spacing:0px;color:#000;-webkit-text-stroke:0.2px;">6:30 PM</div>
<div class=t style="left:1723.00px;top:1243.83px;font-family:'Liberation Serif', serif;font-weight:400;font-size:38.4px;line-height:38.4px;letter-spacing:0px;color:#000;-webkit-text-stroke:0.2px;">9.25</div>
<div class=t style="left:357.60px;top:1294.13px;font-family:'Liberation Serif', serif;font-weight:400;font-size:38.4px;line-height:38.4px;letter-spacing:0px;color:#000;-webkit-text-stroke:0.2px;">1/3/23</div>
<div class=t style="left:578.90px;top:1294.13px;font-family:'Liberation Serif', serif;font-weight:400;font-size:38.4px;line-height:38.4px;letter-spacing:0px;color:#000;-webkit-text-stroke:0.2px;">9:00 AM</div>
<div class=t style="left:822.60px;top:1294.13px;font-family:'Liberation Serif', serif;font-weight:400;font-size:38.4px;line-height:38.4px;letter-spacing:0px;color:#000;-webkit-text-stroke:0.2px;">12:00 PM</div>
<div class=t style="left:1121.20px;top:1294.13px;font-family:'Liberation Serif', serif;font-weight:400;font-size:38.4px;line-height:38.4px;letter-spacing:0px;color:#000;-webkit-text-stroke:0.2px;">12:30 PM</div>
<div class=t style="left:1400.00px;top:1294.13px;font-family:'Liberation Serif', serif;font-weight:400;font-size:38.4px;line-height:38.4px;letter-spacing:0px;color:#000;-webkit-text-stroke:0.2px;">5:15 PM</div>
<div class=t style="left:1723.00px;top:1294.13px;font-family:'Liberation Serif', serif;font-weight:400;font-size:38.4px;line-height:38.4px;letter-spacing:0px;color:#000;-webkit-text-stroke:0.2px;">7.75</div>
<div class=t style="left:357.60px;top:1344.33px;font-family:'Liberation Serif', serif;font-weight:400;font-size:38.4px;line-height:38.4px;letter-spacing:0px;color:#000;-webkit-text-stroke:0.2px;">1/4/23</div>
<div class=t style="left:578.90px;top:1344.33px;font-family:'Liberation Serif', serif;font-weight:400;font-size:38.4px;line-height:38.4px;letter-spacing:0px;color:#000;-webkit-text-stroke:0.2px;">9:00 AM</div>
<div class=t style="left:822.60px;top:1344.33px;font-family:'Liberation Serif', serif;font-weight:400;font-size:38.4px;line-height:38.4px;letter-spacing:0px;color:#000;-webkit-text-stroke:0.2px;">12:00 PM</div>
<div class=t style="left:1121.20px;top:1344.33px;font-family:'Liberation Serif', serif;font-weight:400;font-size:38.4px;line-height:38.4px;letter-spacing:0px;color:#000;-webkit-text-stroke:0.2px;">12:30 PM</div>
<div class=t style="left:1400.00px;top:1344.33px;font-family:'Liberation Serif', serif;font-weight:400;font-size:38.4px;line-height:38.4px;letter-spacing:0px;color:#000;-webkit-text-stroke:0.2px;">6:00 PM</div>
<div class=t style="left:1723.00px;top:1344.33px;font-family:'Liberation Serif', serif;font-weight:400;font-size:38.4px;line-height:38.4px;letter-spacing:0px;color:#000;-webkit-text-stroke:0.2px;">8.50</div>
<div class=t style="left:357.60px;top:1394.43px;font-family:'Liberation Serif', serif;font-weight:400;font-size:38.4px;line-height:38.4px;letter-spacing:0px;color:#000;-webkit-text-stroke:0.2px;">1/5/23</div>
<div class=t style="left:578.90px;top:1394.43px;font-family:'Liberation Serif', serif;font-weight:400;font-size:38.4px;line-height:38.4px;letter-spacing:0px;color:#000;-webkit-text-stroke:0.2px;">9:15 AM</div>
<div class=t style="left:822.60px;top:1394.43px;font-family:'Liberation Serif', serif;font-weight:400;font-size:38.4px;line-height:38.4px;letter-spacing:0px;color:#000;-webkit-text-stroke:0.2px;">12:00 PM</div>
<div class=t style="left:1121.20px;top:1394.43px;font-family:'Liberation Serif', serif;font-weight:400;font-size:38.4px;line-height:38.4px;letter-spacing:0px;color:#000;-webkit-text-stroke:0.2px;">12:30 PM</div>
<div class=t style="left:1400.00px;top:1394.43px;font-family:'Liberation Serif', serif;font-weight:400;font-size:38.4px;line-height:38.4px;letter-spacing:0px;color:#000;-webkit-text-stroke:0.2px;">5:45 PM</div>
<div class=t style="left:1723.00px;top:1394.43px;font-family:'Liberation Serif', serif;font-weight:400;font-size:38.4px;line-height:38.4px;letter-spacing:0px;color:#000;-webkit-text-stroke:0.2px;">8.00</div>
<div class=t style="left:357.60px;top:1444.63px;font-family:'Liberation Serif', serif;font-weight:400;font-size:38.4px;line-height:38.4px;letter-spacing:0px;color:#000;-webkit-text-stroke:0.2px;">1/6/23</div>
<div class=t style="left:1723.00px;top:1444.63px;font-family:'Liberation Serif', serif;font-weight:400;font-size:38.4px;line-height:38.4px;letter-spacing:0px;color:#000;-webkit-text-stroke:0.2px;">0.00</div>
<div class=t style="left:357.60px;top:1494.83px;font-family:'Liberation Serif', serif;font-weight:400;font-size:38.4px;line-height:38.4px;letter-spacing:0px;color:#000;-webkit-text-stroke:0.2px;">1/7/23</div>
<div class=t style="left:1723.00px;top:1494.83px;font-family:'Liberation Serif', serif;font-weight:400;font-size:38.4px;line-height:38.4px;letter-spacing:0px;color:#000;-webkit-text-stroke:0.2px;">0.00</div></div>
<div class=t style="left:285.40px;top:93.45px;font-family:'Liberation Sans', sans-serif;font-weight:700;font-size:21.59px;line-height:21.59px;letter-spacing:-0.129px;color:#e4f1e7;">AutoSave</div>
<div class=t style="left:424.80px;top:95.74px;font-family:'Liberation Sans', sans-serif;font-weight:700;font-size:15.36px;line-height:15.36px;letter-spacing:0.3px;color:#e9f1eb;">OFF</div>
<div class=t style="left:1326.50px;top:90.44px;font-family:'Liberation Sans', sans-serif;font-weight:700;font-size:27.25px;line-height:27.25px;letter-spacing:-0.516px;color:#eef6f0;">Timesheet Template_v5.Gray</div>
<div class=t style="left:128.20px;top:150.00px;font-family:'Liberation Sans', sans-serif;font-weight:700;font-size:26.23px;line-height:26.23px;letter-spacing:0.733px;color:#1f1f1f;">Home</div>
<div class=t style="left:246.00px;top:150.00px;font-family:'Liberation Sans', sans-serif;font-weight:400;font-size:26.23px;line-height:26.23px;letter-spacing:0.7px;color:#1f1f1f;-webkit-text-stroke:0.55px;">Insert</div>
<div class=t style="left:363.90px;top:150.00px;font-family:'Liberation Sans', sans-serif;font-weight:400;font-size:26.23px;line-height:26.23px;letter-spacing:0.567px;color:#1f1f1f;-webkit-text-stroke:0.55px;">Draw</div>
<div class=t style="left:472.80px;top:150.00px;font-family:'Liberation Sans', sans-serif;font-weight:400;font-size:26.23px;line-height:26.23px;letter-spacing:0.12px;color:#1f1f1f;-webkit-text-stroke:0.55px;">Page Layout</div>
<div class=t style="left:670.70px;top:150.00px;font-family:'Liberation Sans', sans-serif;font-weight:400;font-size:26.23px;line-height:26.23px;letter-spacing:0.157px;color:#1f1f1f;-webkit-text-stroke:0.55px;">Formulas</div>
<div class=t style="left:829.30px;top:150.00px;font-family:'Liberation Sans', sans-serif;font-weight:400;font-size:26.23px;line-height:26.23px;letter-spacing:0.467px;color:#1f1f1f;-webkit-text-stroke:0.55px;">Data</div>
<div class=t style="left:931.30px;top:150.00px;font-family:'Liberation Sans', sans-serif;font-weight:400;font-size:26.23px;line-height:26.23px;letter-spacing:-0.04px;color:#1f1f1f;-webkit-text-stroke:0.55px;">Review</div>
<div class=t style="left:1064.80px;top:150.00px;font-family:'Liberation Sans', sans-serif;font-weight:400;font-size:26.23px;line-height:26.23px;letter-spacing:-0.167px;color:#1f1f1f;-webkit-text-stroke:0.55px;">View</div>
<div class=t style="left:1170.50px;top:150.00px;font-family:'Liberation Sans', sans-serif;font-weight:400;font-size:26.23px;line-height:26.23px;letter-spacing:0.471px;color:#1f1f1f;-webkit-text-stroke:0.55px;">Automate</div>
<div class=t style="left:1333.50px;top:150.00px;font-family:'Liberation Sans', sans-serif;font-weight:400;font-size:26.23px;line-height:26.23px;letter-spacing:0.338px;color:#1f1f1f;-webkit-text-stroke:0.55px;">Developer</div>
<div class=t style="left:1531.40px;top:150.00px;font-family:'Liberation Sans', sans-serif;font-weight:400;font-size:26.23px;line-height:26.23px;letter-spacing:0.25px;color:#1f1f1f;-webkit-text-stroke:0.55px;">Tell me</div>
<div class=t style="left:2589.00px;top:155.10px;font-family:'Liberation Sans', sans-serif;font-weight:700;font-size:24.35px;line-height:24.35px;letter-spacing:-0.429px;color:#0f6a37;">Comments</div>
<div class=t style="left:2794.30px;top:155.10px;font-family:'Liberation Sans', sans-serif;font-weight:700;font-size:24.35px;line-height:24.35px;letter-spacing:-0.525px;color:#0f6a37;">Share</div>
<div class=t style="left:146.50px;top:278.75px;font-family:'Liberation Sans', sans-serif;font-weight:400;font-size:20.29px;line-height:20.29px;letter-spacing:0.625px;color:#1c1c1c;-webkit-text-stroke:0.55px;">Paste</div>
<div class=t style="left:343.30px;top:221.06px;font-family:'Liberation Sans', sans-serif;font-weight:400;font-size:24.64px;line-height:24.64px;letter-spacing:-0.529px;color:#1c1c1c;-webkit-text-stroke:0.55px;">Times New Roman</div>
<div class=t style="left:617.00px;top:221.06px;font-family:'Liberation Sans', sans-serif;font-weight:400;font-size:24.64px;line-height:24.64px;letter-spacing:-1.0px;color:#1c1c1c;-webkit-text-stroke:0.55px;">12</div>
<div class=t style="left:1042.00px;top:220.38px;font-family:'Liberation Sans', sans-serif;font-weight:400;font-size:22.5px;line-height:22.5px;letter-spacing:0px;color:#1c1c1c;-webkit-text-stroke:0.2px;transform:rotate(-40deg);transform-origin:20% 80%">ab</div>
<div class=t style="left:1174.00px;top:215.40px;font-family:'Liberation Sans', sans-serif;font-weight:400;font-size:20px;line-height:20px;letter-spacing:0px;color:#262626;">ab</div>
<div class=t style="left:1174.00px;top:230.00px;font-family:'Liberation Sans', sans-serif;font-weight:400;font-size:20px;line-height:20px;letter-spacing:0px;color:#262626;">c</div>
<div class=t style="left:1213.00px;top:223.84px;font-family:'Liberation Sans', sans-serif;font-weight:400;font-size:21.01px;line-height:21.01px;letter-spacing:0.25px;color:#1c1c1c;-webkit-text-stroke:0.55px;">Wrap Text</div>
<div class=t style="left:1211.00px;top:285.74px;font-family:'Liberation Sans', sans-serif;font-weight:400;font-size:21.01px;line-height:21.01px;letter-spacing:0.385px;color:#1c1c1c;-webkit-text-stroke:0.55px;">Merge &amp; Center</div>
<div class=t style="left:1445.00px;top:220.66px;font-family:'Liberation Sans', sans-serif;font-weight:400;font-size:24.64px;line-height:24.64px;letter-spacing:-0.4px;color:#1c1c1c;-webkit-text-stroke:0.55px;">General</div>
<div class=t style="left:1662.00px;top:278.45px;font-family:'Liberation Sans', sans-serif;font-weight:400;font-size:19px;line-height:19px;letter-spacing:0px;color:#2e2e2e;-webkit-text-stroke:0.2px;transform:scaleX(0.82);transform-origin:0 0;letter-spacing:0.6px">0</div>
<div class=t style="left:1649.00px;top:293.05px;font-family:'Liberation Sans', sans-serif;font-weight:400;font-size:19px;line-height:19px;letter-spacing:0px;color:#2e2e2e;-webkit-text-stroke:0.2px;transform:scaleX(0.82);transform-origin:0 0;letter-spacing:0.6px">.00</div>
<div class=t style="left:1699.60px;top:277.65px;font-family:'Liberation Sans', sans-serif;font-weight:400;font-size:19px;line-height:19px;letter-spacing:0px;color:#2e2e2e;-webkit-text-stroke:0.2px;transform:scaleX(0.82);transform-origin:0 0;letter-spacing:0.6px">.00</div>
<div class=t style="left:1709.00px;top:293.05px;font-family:'Liberation Sans', sans-serif;font-weight:400;font-size:19px;line-height:19px;letter-spacing:0px;color:#2e2e2e;-webkit-text-stroke:0.2px;transform:scaleX(0.82);transform-origin:0 0;letter-spacing:0.6px">.0</div>
<div class=t style="left:1777.00px;top:277.84px;font-family:'Liberation Sans', sans-serif;font-weight:400;font-size:21.01px;line-height:21.01px;letter-spacing:0.5px;color:#1c1c1c;-webkit-text-stroke:0.55px;">Conditional</div>
<div class=t style="left:1778.00px;top:300.74px;font-family:'Liberation Sans', sans-serif;font-weight:400;font-size:21.01px;line-height:21.01px;letter-spacing:0.811px;color:#1c1c1c;-webkit-text-stroke:0.55px;">Formatting</div>
<div class=t style="left:1906.00px;top:277.84px;font-family:'Liberation Sans', sans-serif;font-weight:400;font-size:21.01px;line-height:21.01px;letter-spacing:0.6px;color:#1c1c1c;-webkit-text-stroke:0.55px;">Format</div>
<div class=t style="left:1902.00px;top:300.74px;font-family:'Liberation Sans', sans-serif;font-weight:400;font-size:21.01px;line-height:21.01px;letter-spacing:0.343px;color:#1c1c1c;-webkit-text-stroke:0.55px;">as Table</div>
<div class=t style="left:2019.00px;top:277.84px;font-family:'Liberation Sans', sans-serif;font-weight:400;font-size:21.01px;line-height:21.01px;letter-spacing:0.567px;color:#1c1c1c;-webkit-text-stroke:0.55px;">Cell</div>
<div class=t style="left:2007.60px;top:300.74px;font-family:'Liberation Sans', sans-serif;font-weight:400;font-size:21.01px;line-height:21.01px;letter-spacing:0.48px;color:#1c1c1c;-webkit-text-stroke:0.55px;">Styles</div>
<div class=t style="left:2173.70px;top:212.45px;font-family:'Liberation Sans', sans-serif;font-weight:400;font-size:20.29px;line-height:20.29px;letter-spacing:0.92px;color:#1c1c1c;-webkit-text-stroke:0.55px;">Insert</div>
<div class=t style="left:2173.70px;top:254.85px;font-family:'Liberation Sans', sans-serif;font-weight:400;font-size:20.29px;line-height:20.29px;letter-spacing:0.94px;color:#1c1c1c;-webkit-text-stroke:0.55px;">Delete</div>
<div class=t style="left:2173.70px;top:297.45px;font-family:'Liberation Sans', sans-serif;font-weight:400;font-size:20.29px;line-height:20.29px;letter-spacing:0.86px;color:#1c1c1c;-webkit-text-stroke:0.55px;">Format</div>
<div class=t style="left:2398.60px;top:277.84px;font-family:'Liberation Sans', sans-serif;font-weight:400;font-size:21.01px;line-height:21.01px;letter-spacing:0.56px;color:#1c1c1c;-webkit-text-stroke:0.55px;">Sort &amp;</div>
<div class=t style="left:2403.80px;top:300.94px;font-family:'Liberation Sans', sans-serif;font-weight:400;font-size:21.01px;line-height:21.01px;letter-spacing:0.5px;color:#1c1c1c;-webkit-text-stroke:0.55px;">Filter</div>
<div class=t style="left:2492.50px;top:277.84px;font-family:'Liberation Sans', sans-serif;font-weight:400;font-size:21.01px;line-height:21.01px;letter-spacing:0.38px;color:#1c1c1c;-webkit-text-stroke:0.55px;">Find &amp;</div>
<div class=t style="left:2493.50px;top:300.94px;font-family:'Liberation Sans', sans-serif;font-weight:400;font-size:21.01px;line-height:21.01px;letter-spacing:0.58px;color:#1c1c1c;-webkit-text-stroke:0.55px;">Select</div>
<div class=t style="left:2618.30px;top:277.84px;font-family:'Liberation Sans', sans-serif;font-weight:400;font-size:21.01px;line-height:21.01px;letter-spacing:0.05px;color:#1c1c1c;-webkit-text-stroke:0.55px;">Analyze</div>
<div class=t style="left:2631.80px;top:300.94px;font-family:'Liberation Sans', sans-serif;font-weight:400;font-size:21.01px;line-height:21.01px;letter-spacing:0.1px;color:#1c1c1c;-webkit-text-stroke:0.55px;">Data</div>
<div class=t style="left:2742.20px;top:277.84px;font-family:'Liberation Sans', sans-serif;font-weight:400;font-size:21.01px;line-height:21.01px;letter-spacing:0.36px;color:#1c1c1c;-webkit-text-stroke:0.55px;">Solver</div>
<div class=t style="left:188.50px;top:411.68px;font-family:'Liberation Sans', sans-serif;font-weight:400;font-size:34.5px;line-height:34.5px;letter-spacing:0px;color:#535353;">A</div>
<div class=t style="left:330.50px;top:411.68px;font-family:'Liberation Sans', sans-serif;font-weight:400;font-size:34.5px;line-height:34.5px;letter-spacing:0px;color:#535353;">B</div>
<div class=t style="left:581.25px;top:411.68px;font-family:'Liberation Sans', sans-serif;font-weight:400;font-size:34.5px;line-height:34.5px;letter-spacing:0px;color:#535353;">C</div>
<div class=t style="left:840.00px;top:411.68px;font-family:'Liberation Sans', sans-serif;font-weight:400;font-size:34.5px;line-height:34.5px;letter-spacing:0px;color:#535353;">D</div>
<div class=t style="left:1118.75px;top:411.68px;font-family:'Liberation Sans', sans-serif;font-weight:400;font-size:34.5px;line-height:34.5px;letter-spacing:0px;color:#535353;">E</div>
<div class=t style="left:1398.00px;top:411.68px;font-family:'Liberation Sans', sans-serif;font-weight:400;font-size:34.5px;line-height:34.5px;letter-spacing:0px;color:#535353;">F</div>
<div class=t style="left:1655.50px;top:411.68px;font-family:'Liberation Sans', sans-serif;font-weight:400;font-size:34.5px;line-height:34.5px;letter-spacing:0px;color:#535353;">G</div>
<div class=t style="left:1885.50px;top:411.68px;font-family:'Liberation Sans', sans-serif;font-weight:400;font-size:34.5px;line-height:34.5px;letter-spacing:0px;color:#535353;">O</div>
<div class=t style="left:2088.50px;top:411.68px;font-family:'Liberation Sans', sans-serif;font-weight:400;font-size:34.5px;line-height:34.5px;letter-spacing:0px;color:#535353;">P</div>
<div class=t style="left:2287.75px;top:411.68px;font-family:'Liberation Sans', sans-serif;font-weight:400;font-size:34.5px;line-height:34.5px;letter-spacing:0px;color:#535353;">Q</div>
<div class=t style="left:2489.25px;top:411.68px;font-family:'Liberation Sans', sans-serif;font-weight:400;font-size:34.5px;line-height:34.5px;letter-spacing:0px;color:#535353;">R</div>
<div class=t style="left:2691.50px;top:411.68px;font-family:'Liberation Sans', sans-serif;font-weight:400;font-size:34.5px;line-height:34.5px;letter-spacing:0px;color:#535353;">S</div>
<div class=t style="left:126.80px;top:350.18px;font-family:'Liberation Sans', sans-serif;font-weight:400;font-size:24.5px;line-height:24.5px;letter-spacing:0px;color:#111111;-webkit-text-stroke:0.55px;">Z64</div>
<div class=t style="left:412.50px;top:346.87px;font-family:'Liberation Serif', serif;font-weight:400;font-size:31px;line-height:31px;letter-spacing:0px;color:#2c2c2c;-webkit-text-stroke:0.2px;font-style:italic">fx</div>
<div class=t style="left:257.00px;top:1523.30px;font-family:'Liberation Sans', sans-serif;font-weight:400;font-size:24.35px;line-height:24.35px;letter-spacing:0.336px;color:#3d3d3d;-webkit-text-stroke:0.55px;">Instructions</div>
<div class=t style="left:451.80px;top:1523.54px;font-family:'Liberation Sans', sans-serif;font-weight:700;font-size:23.48px;line-height:23.48px;letter-spacing:-0.137px;color:#17804a;">Timesheet</div>
<div class=t style="left:153.50px;top:1572.29px;font-family:'Liberation Sans', sans-serif;font-weight:400;font-size:23.19px;line-height:23.19px;letter-spacing:0.425px;color:#535353;-webkit-text-stroke:0.55px;">Ready</div>
<div class=t style="left:262.90px;top:1572.29px;font-family:'Liberation Sans', sans-serif;font-weight:400;font-size:23.19px;line-height:23.19px;letter-spacing:0.625px;color:#535353;-webkit-text-stroke:0.55px;">Calculate</div>
<div class=t style="left:502.80px;top:1572.59px;font-family:'Liberation Sans', sans-serif;font-weight:400;font-size:23.19px;line-height:23.19px;letter-spacing:0.624px;color:#535353;-webkit-text-stroke:0.55px;">Accessibility: Investigate</div>
<div class=t style="left:2782.00px;top:1572.29px;font-family:'Liberation Sans', sans-serif;font-weight:400;font-size:23.19px;line-height:23.19px;letter-spacing:0.9px;color:#535353;-webkit-text-stroke:0.55px;">160%</div>
</div></div>
</body></html>
